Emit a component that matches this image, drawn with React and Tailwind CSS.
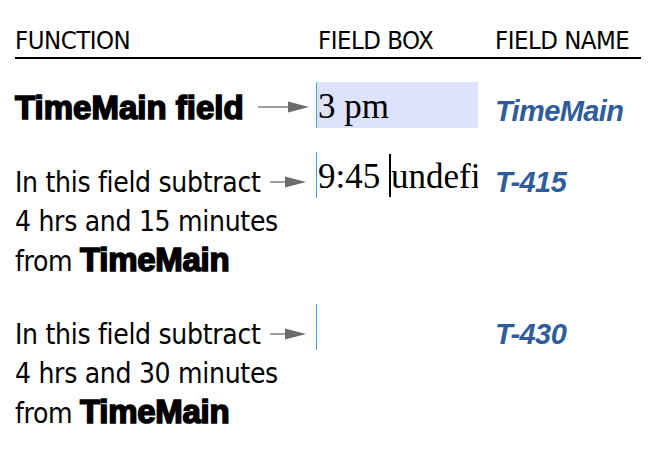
import React from "react";

const NARROW = { fontFamily: "'DejaVu Sans Condensed','Liberation Sans Narrow','Arial Narrow',sans-serif" };
const HEAVY = { fontFamily: "'Liberation Sans',Arial,sans-serif" };
const SERIF = { fontFamily: "'Liberation Serif','Times New Roman',serif" };

function Arrow({ width }) {
  return (
    <svg width={width} height="12" viewBox={`0 0 ${width} 12`} className="block flex-none">
      <line x1="0" y1="6" x2={width - 20} y2="6" stroke="#6b6b6b" strokeWidth="1.3" />
      <path d={`M${width - 21} 0.5 L${width} 6 L${width - 21} 11.5 Z`} fill="#6b6b6b" />
    </svg>
  );
}

function Heavy({ children }) {
  return (
    <span className="font-bold text-[33px] text-black [-webkit-text-stroke:1.6px_black]" style={HEAVY}>
      {children}
    </span>
  );
}

function FieldName({ children }) {
  return (
    <span className="text-[29px] font-bold italic tracking-[-0.6px] text-[#2f5d9c]" style={HEAVY}>
      {children}
    </span>
  );
}

function SubtractRow({ minutes, value, name }) {
  return (
    <div className="grid h-[128px] grid-cols-[301px_179px_1fr] items-start">
      <div
        className="whitespace-nowrap pt-[12px] text-[28px] leading-[38.5px] tracking-[-0.3px] text-black"
        style={NARROW}
      >
        <div className="flex items-start">
          <span>In this field subtract</span>
          <span className="ml-[9px] mt-[12px]">
            <Arrow width={36} />
          </span>
        </div>
        <div>4 hrs and {minutes} minutes</div>
        <div>
          from <Heavy>TimeMain</Heavy>
        </div>
      </div>
      <div className="h-[46px] w-[162px] border-l border-[#4aa3e6] pl-[1px]">{value}</div>
      <div className="pt-[11px] leading-[38.5px]">
        <FieldName>{name}</FieldName>
      </div>
    </div>
  );
}

export default function App() {
  return (
    <div className="h-[468px] w-[668px] overflow-hidden bg-white pl-[15px] pt-[26px]">
      <div className="w-[626px]">
        <div
          className="grid grid-cols-[303px_177px_1fr] border-b-2 border-black pb-[2px] text-[25.5px] leading-[29px] tracking-[-0.5px] text-black"
          style={NARROW}
        >
          <div>FUNCTION</div>
          <div>FIELD BOX</div>
          <div>FIELD NAME</div>
        </div>

        <div className="mt-[23px] grid h-[46px] grid-cols-[301px_179px_1fr] items-start">
          <div className="flex items-start whitespace-nowrap">
            <span className="pt-[3px] leading-[46px]">
              <Heavy>TimeMain field</Heavy>
            </span>
            <span className="ml-[14px] mt-[19px]">
              <Arrow width={51} />
            </span>
          </div>
          <div
            className="h-[46px] w-[162px] border-l border-[#4aa3e6] bg-[#dee2fb] pl-[1px] text-[35px] leading-[50px] text-black"
            style={SERIF}
          >
            3 pm
          </div>
          <div className="pt-[6px] leading-[46px]">
            <FieldName>TimeMain</FieldName>
          </div>
        </div>

        <div className="mt-[24px]">
          <SubtractRow
            minutes="15"
            name="T-415"
            value={
              <div className="flex h-full items-start text-[35px] leading-[50px] text-black" style={SERIF}>
                <span className="whitespace-pre">9:45 </span>
                <span className="mt-[2px] h-[43px] w-[2px] flex-none bg-black" />
                <span className="overflow-hidden whitespace-nowrap">undefi</span>
              </div>
            }
          />
        </div>

        <div className="mt-[24px]">
          <SubtractRow minutes="30" name="T-430" value={null} />
        </div>
      </div>
    </div>
  );
}
